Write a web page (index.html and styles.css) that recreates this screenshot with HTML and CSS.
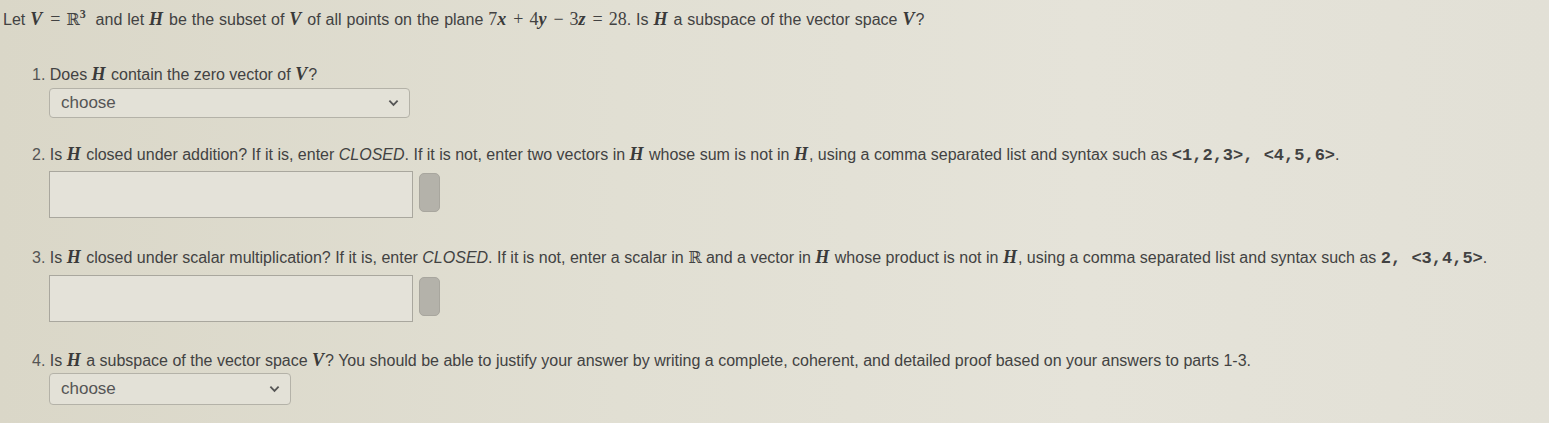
FILE: index.html
```html
<!DOCTYPE html>
<html>
<head>
<meta charset="utf-8">
<link rel="stylesheet" href="styles.css">
</head>
<body>
<div class="page">
  <p class="intro">Let <i class="m">V</i><span class="op">=</span><span class="bb">ℝ</span><sup class="sup">3</sup> and let <i class="m">H</i> be the subset of <i class="m">V</i> of all points on the plane <span class="mn">7</span><i class="m">x</i><span class="op">+</span><span class="mn">4</span><i class="m">y</i><span class="op">−</span><span class="mn">3</span><i class="m">z</i><span class="op">=</span><span class="mn">28</span>. Is <i class="m">H</i> a subspace of the vector space <i class="m">V</i>?</p>

  <ol class="parts">
    <li class="part p1">
      <div class="q">Does <i class="m">H</i> contain the zero vector of <i class="m">V</i>?</div>
      <div class="sel sel-wide"><span>choose</span><svg class="chev" viewBox="0 0 12 8" width="11" height="8"><path d="M1.5 1.5 L6 6 L10.5 1.5" fill="none" stroke="#555" stroke-width="2"/></svg></div>
    </li>
    <li class="part p2">
      <div class="q">Is <i class="m">H</i> closed under addition? If it is, enter <em>CLOSED</em>. If it is not, enter two vectors in <i class="m">H</i> whose sum is not in <i class="m">H</i>, using a comma separated list and syntax such as <code>&lt;1,2,3&gt;, &lt;4,5,6&gt;</code>.</div>
      <div class="ansrow"><div class="box"></div><div class="btn"></div></div>
    </li>
    <li class="part p3">
      <div class="q">Is <i class="m">H</i> closed under scalar multiplication? If it is, enter <em>CLOSED</em>. If it is not, enter a scalar in <span class="bb">ℝ</span> and a vector in <i class="m">H</i> whose product is not in <i class="m">H</i>, using a comma separated list and syntax such as <code>2, &lt;3,4,5&gt;</code>.</div>
      <div class="ansrow"><div class="box"></div><div class="btn"></div></div>
    </li>
    <li class="part p4">
      <div class="q">Is <i class="m">H</i> a subspace of the vector space <i class="m">V</i>? You should be able to justify your answer by writing a complete, coherent, and detailed proof based on your answers to parts 1-3.</div>
      <div class="sel sel-narrow"><span>choose</span><svg class="chev" viewBox="0 0 12 8" width="11" height="8"><path d="M1.5 1.5 L6 6 L10.5 1.5" fill="none" stroke="#555" stroke-width="2"/></svg></div>
    </li>
  </ol>
</div>
</body>
</html>
```
FILE: styles.css
```css
html, body {
  margin: 0;
  padding: 0;
}
body {
  width: 1549px;
  height: 423px;
  overflow: hidden;
  background: linear-gradient(90deg, #dad7c8 0%, #e1dfd3 40%, #e5e3d9 70%, #e2e0d6 100%);
  font-family: "Liberation Sans", Arial, sans-serif;
  font-size: 16px;
  color: #424242;
}
.page {
  padding: 9px 0 0 3px;
}
.intro {
  margin: 0;
  line-height: 22px;
  word-spacing: 0.5px;
}
.m {
  font-family: "Liberation Serif", "DejaVu Serif", serif;
  font-style: italic;
  font-weight: bold;
  font-size: 18px;
  line-height: 1;
  color: #3a3a3a;
  margin-right: 1px;
}
.mn {
  font-family: "Liberation Serif", serif;
  font-size: 18px;
  line-height: 1;
}
.op {
  font-family: "Liberation Serif", serif;
  font-size: 18px;
  line-height: 1;
  margin: 0 6px;
}
.intro .op:first-of-type {
  margin: 0 6px 0 7px;
}
.bb {
  font-family: "DejaVu Serif", serif;
  font-size: 16px;
  line-height: 1;
}
.sup {
  font-family: "Liberation Serif", serif;
  font-size: 12px;
  font-weight: bold;
  vertical-align: 7px;
  line-height: 0;
  margin-right: 5px;
}
em {
  font-style: italic;
}
code {
  font-family: "Liberation Mono", "DejaVu Sans Mono", monospace;
  font-weight: bold;
  font-size: 17px;
  line-height: 1;
  white-space: pre;
}
.parts {
  margin: 0;
  padding: 0 0 0 29px;
  list-style: none;
  counter-reset: part;
}
.part {
  counter-increment: part;
}
.q::before {
  content: counter(part) ". ";
  color: #555;
}
.q {
  line-height: 22px;
}
.p1 { margin-top: 33px; }
.p2 { margin-top: 26px; }
.p3 { margin-top: 29px; }
.p4 { margin-top: 28px; }
.sel {
  margin: 2px 0 0 17px;
  border: 1px solid #b4b2a8;
  border-radius: 4px;
  background: #e3e1d7;
  display: flex;
  align-items: center;
  justify-content: space-between;
  padding: 0 10px 0 11px;
  box-sizing: border-box;
  font-size: 17px;
  color: #555;
}
.sel-wide { width: 361px; height: 30px; }
.sel-narrow { width: 242px; height: 32px; margin-top: 1px; }
.chev { display: block; }
.ansrow {
  display: flex;
  align-items: flex-start;
  gap: 6px;
  margin: 5px 0 0 17px;
}
.p3 .ansrow { margin-top: 6px; }
.box {
  width: 364px;
  height: 47px;
  border: 1px solid #a9a79e;
  background: #e4e2d9;
  box-sizing: border-box;
}
.btn {
  width: 21px;
  height: 39px;
  margin-top: 2px;
  border-radius: 5px;
  background: #b4b2aa;
  border: 1px solid #a8a69e;
  box-sizing: border-box;
}
```
